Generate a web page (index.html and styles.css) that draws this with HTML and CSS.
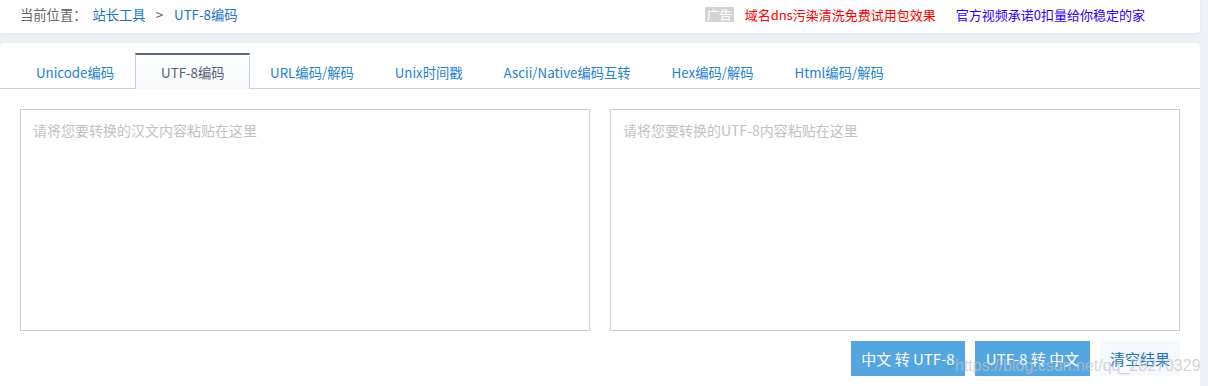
FILE: index.html
```html
<!DOCTYPE html>
<html lang="zh-CN">
<head>
<meta charset="utf-8">
<title>UTF-8编码</title>
<link rel="stylesheet" href="styles.css">
</head>
<body>
<div class="topbar">
  <div class="crumbs">
    <span class="crumb-label">当前位置：</span>
    <a class="crumb-link">站长工具</a>
    <span class="crumb-sep">&gt;</span>
    <a class="crumb-link">UTF-8编码</a>
  </div>
  <div class="ads">
    <span class="ad-tag">广告</span>
    <a class="ad-red">域名dns污染清洗免费试用包效果</a>
    <a class="ad-blue">官方视频承诺0扣量给你稳定的家</a>
  </div>
</div>
<div class="main">
  <div class="tabs">
    <a class="tab">Unicode编码</a>
    <a class="tab active">UTF-8编码</a>
    <a class="tab">URL编码/解码</a>
    <a class="tab">Unix时间戳</a>
    <a class="tab">Ascii/Native编码互转</a>
    <a class="tab">Hex编码/解码</a>
    <a class="tab">Html编码/解码</a>
  </div>
  <div class="panes">
    <textarea class="box" placeholder="请将您要转换的汉文内容粘贴在这里"></textarea>
    <textarea class="box" placeholder="请将您要转换的UTF-8内容粘贴在这里"></textarea>
  </div>
  <div class="actions">
    <button class="btn primary">中文 转 UTF-8</button>
    <button class="btn primary">UTF-8 转 中文</button>
    <button class="btn plain">清空结果</button>
  </div>
  <div class="watermark">https://blog.csdn.net/qq_28270329</div>
</div>
</body>
</html>
```
FILE: styles.css
```css
html, body {
  margin: 0;
  padding: 0;
}
body {
  background: #edf1f7;
  font-family: "Microsoft YaHei", "Noto Sans CJK SC", sans-serif;
  font-size: 13.3px;
  width: 1208px;
  height: 386px;
  overflow: hidden;
}
a { text-decoration: none; cursor: pointer; }

.topbar {
  width: 1200px;
  height: 33px;
  box-sizing: border-box;
  background: #fff;
  border-radius: 0 0 4px 0;
  display: flex;
  align-items: center;
  justify-content: space-between;
  padding: 0 55px 5px 20px;
  box-shadow: 0 1px 3px rgba(180, 195, 215, 0.25);
}
.crumbs {
  display: flex;
  align-items: center;
}
.crumb-label { color: #666; margin-right: 6px; }
.crumb-link { color: #1d74c0; }
.crumb-sep { color: #666; margin: 0 11px 0 10px; }

.ads {
  display: flex;
  align-items: center;
  font-size: 13px;
}
.ad-tag {
  background: #d4d4d4;
  color: #fff;
  font-size: 12.5px;
  line-height: 15px;
  padding: 0 2px;
  margin-right: 11px;
}
.ad-red { color: #ff0000; margin-right: 20px; }
.ad-blue { color: #2a00ff; }

.main {
  position: relative;
  margin-top: 10px;
  width: 1200px;
  height: 343px;
  background: #fff;
  border-radius: 4px 4px 0 0;
}

.tabs {
  display: flex;
  padding: 10px 0 0 14px;
  border-bottom: 1px solid #c8d2e2;
  height: 35px;
}
.tab {
  display: flex;
  align-items: center;
  padding: 0 19.5px;
  color: #1f7fd0;
  border-top: 2px solid transparent;
  border-left: 1px solid transparent;
  border-right: 1px solid transparent;
  box-sizing: border-box;
  height: 36px;
  white-space: nowrap;
}
.tab:first-child { padding: 0 20px 0 21px; }
.tab.active {
  color: #555f73;
  border-top-color: #5b6a88;
  border-left-color: #c5cedf;
  border-right-color: #c5cedf;
  background: linear-gradient(#fff, #f6f8fb);
  padding: 0 24px 0 25px;
}

.panes {
  display: grid;
  grid-template-columns: 1fr 1fr;
  gap: 20px;
  padding: 20px 20px 0 20px;
}
.box {
  display: block;
  height: 222px;
  box-sizing: border-box;
  border: 1px solid #c5cbd9;
  padding: 10px 12px;
  font-family: inherit;
  font-size: 14px;
  resize: none;
  outline: none;
  margin: 0;
}
.box::placeholder { color: #c2c2c2; }

.actions {
  display: flex;
  justify-content: flex-end;
  gap: 10px;
  padding: 10px 20px 0 0;
}
.btn {
  height: 35px;
  border: none;
  font-family: inherit;
  font-size: 15px;
  padding: 0;
  margin: 0;
  white-space: nowrap;
  cursor: pointer;
}
.btn.primary {
  background: #54a6e1;
  color: #fff;
  width: 114px;
}
.btn.primary + .btn.primary { width: 115px; }
.btn.plain {
  background: #f5f8fc;
  color: #1d74c0;
  width: 80px;
}

.watermark {
  position: absolute;
  left: 955px;
  top: 314px;
  font-family: "Liberation Sans", Arial, sans-serif;
  font-size: 16px;
  color: rgba(195, 195, 195, 0.7);
  white-space: nowrap;
  pointer-events: none;
}
```
